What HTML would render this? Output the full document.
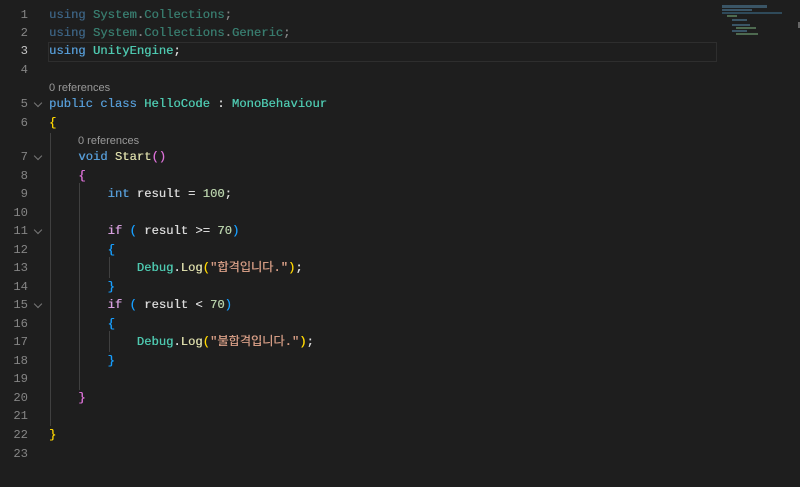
<!DOCTYPE html>
<html><head><meta charset="utf-8"><style>
body{margin:0;width:800px;height:487px;background:#1e1e1e;overflow:hidden;position:relative;font-family:"Liberation Mono","Noto Sans CJK KR",monospace;font-size:12.2px;}
.l{position:absolute;left:49px;white-space:pre;color:#dcdcdc;height:18px;line-height:18px;text-shadow:0.3px 0 0 currentColor}
.n{position:absolute;width:28px;text-align:right;left:0;color:#858585;line-height:18px}
.f{position:absolute;left:35px;width:5px;height:5px;border-right:1px solid #777;border-bottom:1px solid #777;transform:rotate(45deg)}
.r{position:absolute;font-family:"Liberation Sans",sans-serif;font-size:11px;color:#999;line-height:14px}
.k{color:#569cd6}.t{color:#4ec9b0}.m{color:#dcdcaa}.s{color:#d69d85}.num{color:#b5cea8}.c{color:#d8a0df}.v{color:#dadada}
.y{color:#ffd700}.p{color:#da70d6}.b{color:#179fff}.dim{opacity:.55}
.g{position:absolute;width:1px;background:#404040}
</style></head><body>
<div style="position:absolute;left:48px;top:42px;width:667px;height:18px;border:1px solid #2e2e2e"></div>
<div class="n" style="top:6px">1</div><div class="l dim" style="top:6px"><span class="k">using</span> <span class="t">System</span>.<span class="t">Collections</span>;</div>
<div class="n" style="top:24px">2</div><div class="l dim" style="top:24px"><span class="k">using</span> <span class="t">System</span>.<span class="t">Collections</span>.<span class="t">Generic</span>;</div>
<div class="n" style="top:42px;color:#c6c6c6">3</div><div class="l" style="top:42px"><span class="k">using</span> <span class="t">UnityEngine</span>;</div>
<div class="n" style="top:61px">4</div>
<div class="r" style="left:49px;top:81px">0 references</div>
<div class="n" style="top:95px">5</div><div class="f" style="top:100px"></div><div class="l" style="top:95px"><span class="k">public class</span> <span class="t">HelloCode</span> : <span class="t">MonoBehaviour</span></div>
<div class="n" style="top:114px">6</div><div class="l" style="top:114px"><span class="y">{</span></div>
<div class="r" style="left:78px;top:134px">0 references</div>
<div class="n" style="top:148px">7</div><div class="f" style="top:153px"></div><div class="l" style="top:148px">    <span class="k">void</span> <span class="m">Start</span><span class="p">()</span></div>
<div class="n" style="top:167px">8</div><div class="l" style="top:167px">    <span class="p">{</span></div>
<div class="n" style="top:185px">9</div><div class="l" style="top:185px">        <span class="k">int</span> <span class="v">result</span> = <span class="num">100</span>;</div>
<div class="n" style="top:204px">10</div>
<div class="n" style="top:222px">11</div><div class="f" style="top:227px"></div><div class="l" style="top:222px">        <span class="c">if</span> <span class="b">(</span> <span class="v">result</span> &gt;= <span class="num">70</span><span class="b">)</span></div>
<div class="n" style="top:241px">12</div><div class="l" style="top:241px">        <span class="b">{</span></div>
<div class="n" style="top:259px">13</div><div class="l" style="top:259px">            <span class="t">Debug</span>.<span class="m">Log</span><span class="y">(</span><span class="s">"합격입니다."</span><span class="y">)</span>;</div>
<div class="n" style="top:278px">14</div><div class="l" style="top:278px">        <span class="b">}</span></div>
<div class="n" style="top:296px">15</div><div class="f" style="top:301px"></div><div class="l" style="top:296px">        <span class="c">if</span> <span class="b">(</span> <span class="v">result</span> &lt; <span class="num">70</span><span class="b">)</span></div>
<div class="n" style="top:315px">16</div><div class="l" style="top:315px">        <span class="b">{</span></div>
<div class="n" style="top:333px">17</div><div class="l" style="top:333px">            <span class="t">Debug</span>.<span class="m">Log</span><span class="y">(</span><span class="s">"불합격입니다."</span><span class="y">)</span>;</div>
<div class="n" style="top:352px">18</div><div class="l" style="top:352px">        <span class="b">}</span></div>
<div class="n" style="top:370px">19</div>
<div class="n" style="top:389px">20</div><div class="l" style="top:389px">    <span class="p">}</span></div>
<div class="n" style="top:407px">21</div>
<div class="n" style="top:426px">22</div><div class="l" style="top:426px"><span class="y">}</span></div>
<div class="n" style="top:445px">23</div>
<div class="g" style="left:50px;top:133px;height:293px"></div>
<div class="g" style="left:79px;top:183px;height:207px"></div>
<div class="g" style="left:109px;top:257px;height:21px"></div>
<div class="g" style="left:109px;top:331px;height:21px"></div>
<div style="position:absolute;left:722px;top:5px;width:45px;height:3px;background:#3a5566"></div>
<div style="position:absolute;left:722px;top:9px;width:30px;height:2px;background:#3a5566"></div>
<div style="position:absolute;left:722px;top:12px;width:60px;height:2px;background:#2f4a5a"></div>
<div style="position:absolute;left:727px;top:15px;width:10px;height:2px;background:#4e6a50"></div>
<div style="position:absolute;left:732px;top:19px;width:15px;height:2px;background:#3a5566"></div>
<div style="position:absolute;left:732px;top:24px;width:18px;height:2px;background:#3a5566"></div>
<div style="position:absolute;left:736px;top:27px;width:20px;height:2px;background:#4e6a50"></div>
<div style="position:absolute;left:732px;top:30px;width:15px;height:2px;background:#3a5566"></div>
<div style="position:absolute;left:736px;top:33px;width:22px;height:2px;background:#4e6a50"></div>
<div style="position:absolute;left:798px;top:22px;width:2px;height:6px;background:#666"></div>
</body></html>
